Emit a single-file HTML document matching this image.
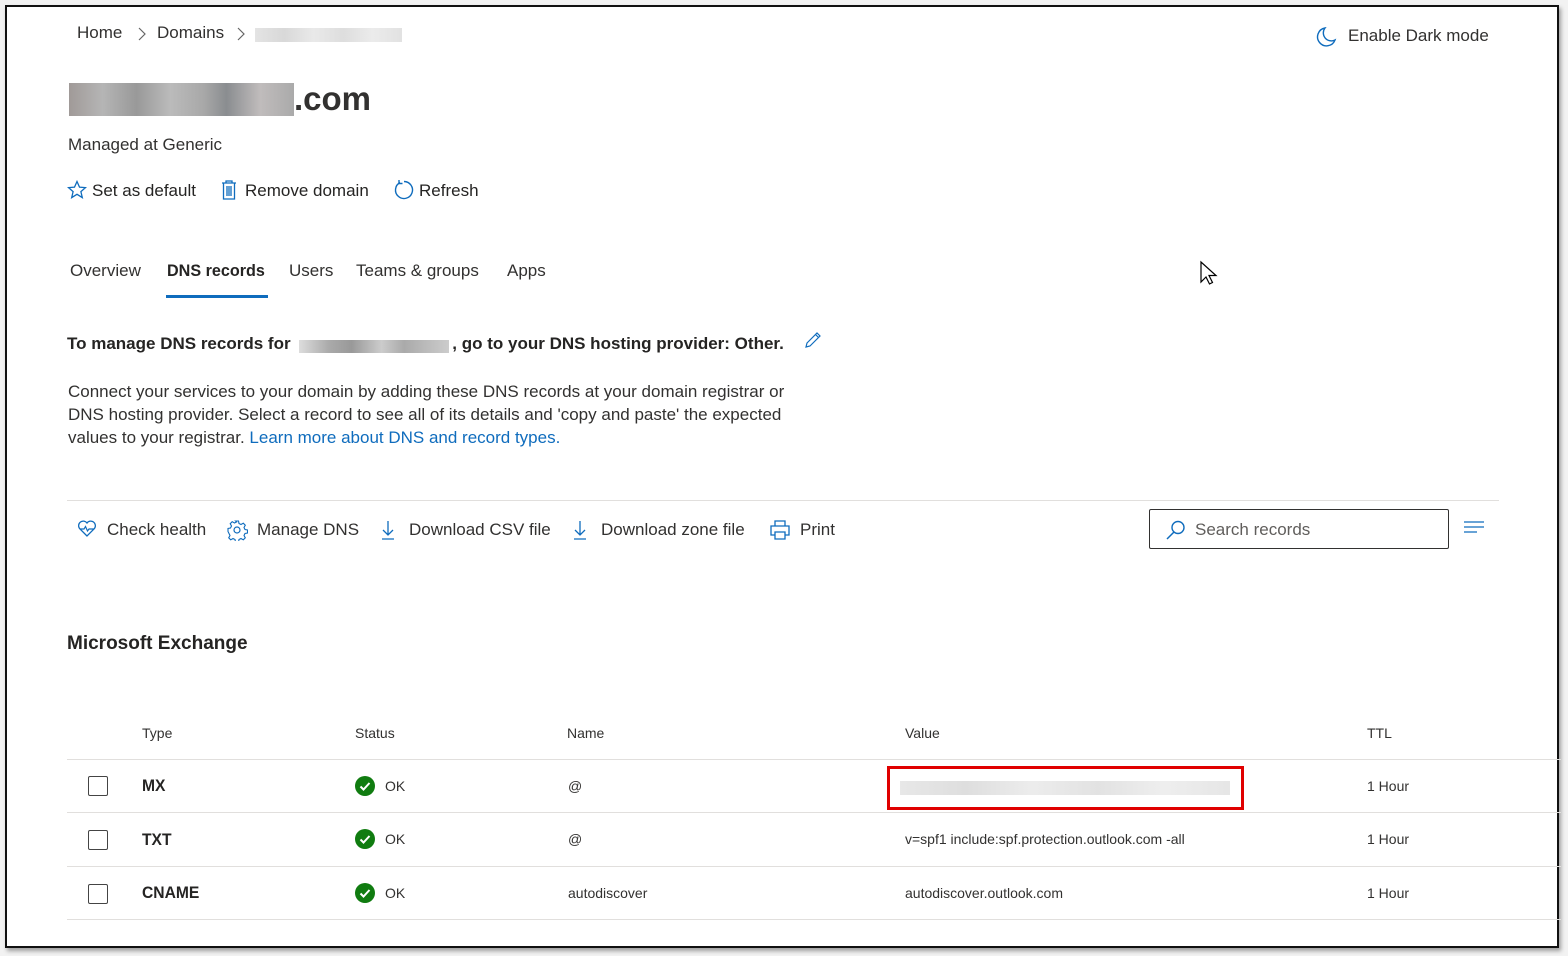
<!DOCTYPE html>
<html><head><meta charset="utf-8"><style>
*{margin:0;padding:0;box-sizing:border-box}
body{width:1568px;height:956px;background:#f2f2f2;position:relative;overflow:hidden;font-family:"Liberation Sans",sans-serif;color:#323130}
#frame{position:absolute;left:5px;top:5px;width:1554px;height:943px;border:2px solid #111;background:#fff;box-shadow:2px 3px 4px rgba(0,0,0,.35)}
.a{position:absolute;white-space:nowrap}
.blur{position:absolute;background:linear-gradient(90deg,#d8d8d8,#c8c8c8 20%,#e0e0e0 40%,#cfcfcf 60%,#e3e3e3 80%,#d5d5d5)}
.blue{color:#0f6cbd}
.t17{font-size:17px}
.hdr{font-size:14px;color:#323130}
.row{position:absolute;left:60px;width:1494px;height:1px;background:#e1dfdd}
.cb{position:absolute;left:81px;width:20px;height:20px;border:1.5px solid #444;border-radius:2px}
.ok{position:absolute;left:348px;width:20px;height:20px;border-radius:50%;background:#107c10}
.type{font-size:17px;left:135px;color:#252423;font-weight:bold;transform:scaleX(.92);transform-origin:left}
.cell{font-size:14px}
</style></head><body>
<div id="frame">
<div class="a t17" style="left:70px;top:16px">Home</div>
<svg class="a" style="left:130px;top:20px" width="10" height="14" viewBox="0 0 10 14"><path d="M2 1l6 6-6 6" fill="none" stroke="#666" stroke-width="1.2"/></svg>
<div class="a t17" style="left:150px;top:16px">Domains</div>
<svg class="a" style="left:229px;top:20px" width="10" height="14" viewBox="0 0 10 14"><path d="M2 1l6 6-6 6" fill="none" stroke="#666" stroke-width="1.2"/></svg>
<div class="blur" style="left:248px;top:21px;width:147px;height:14px;opacity:.7"></div>
<svg class="a" style="left:1309px;top:19px" width="22" height="22" viewBox="0 0 22 22"><path d="M9 2a9 9 0 1 0 10 12A8 8 0 0 1 9 2z" fill="none" stroke="#0f6cbd" stroke-width="1.4"/></svg>
<div class="a t17" style="left:1341px;top:19px">Enable Dark mode</div>
<div class="blur" style="left:62px;top:76px;width:225px;height:33px;background:linear-gradient(90deg,#a09a98,#b5b5b5 15%,#999 30%,#bbb 45%,#a8a8a8 60%,#8a8d90 70%,#c0bcbc 85%,#aaa)"></div>
<div class="a" style="left:287px;top:73px;font-size:33px;font-weight:bold;color:#323130">.com</div>
<div class="a t17" style="left:61px;top:128px">Managed at Generic</div>
<svg class="a" style="left:60px;top:173px" width="20" height="20" viewBox="0 0 20 20"><path d="M10 1.5l2.5 5.6 6 .5-4.6 4 1.4 6-5.3-3.3-5.3 3.3 1.4-6-4.6-4 6-.5z" fill="none" stroke="#0f6cbd" stroke-width="1.3"/></svg>
<div class="a t17" style="left:85px;top:174px;color:#252423">Set as default</div>
<svg class="a" style="left:214px;top:172px" width="16" height="22" viewBox="0 0 16 22"><path d="M1 4h14M5 4V2h6v2M2.5 4v16h11V4M6 7v10M8 7v10M10 7v10" fill="none" stroke="#0f6cbd" stroke-width="1.3"/></svg>
<div class="a t17" style="left:238px;top:174px;color:#252423">Remove domain</div>
<svg class="a" style="left:386px;top:172px" width="22" height="22" viewBox="0 0 22 22"><path d="M7 3.5A8.5 8.5 0 1 0 11 2.5" fill="none" stroke="#0f6cbd" stroke-width="1.4"/><path d="M6 1v3.5h3.5" fill="none" stroke="#0f6cbd" stroke-width="1.4"/></svg>
<div class="a t17" style="left:412px;top:174px;color:#252423">Refresh</div>
<div class="a t17" style="left:63px;top:254px">Overview</div>
<div class="a t17" style="left:160px;top:254px;color:#252423;font-weight:bold;transform:scaleX(.95);transform-origin:left">DNS records</div>
<div class="a" style="left:159px;top:288px;width:102px;height:3px;background:#0f6cbd"></div>
<div class="a t17" style="left:282px;top:254px">Users</div>
<div class="a t17" style="left:349px;top:254px">Teams &amp; groups</div>
<div class="a t17" style="left:500px;top:254px">Apps</div>
<div class="a t17" style="left:60px;top:327px;font-weight:bold;color:#252423">To manage DNS records for <span style="display:inline-block;width:157px"></span>, go to your DNS hosting provider: Other.</div>
<div class="blur" style="left:292px;top:333px;width:150px;height:13px;background:linear-gradient(90deg,#ddd,#aaa 20%,#999 35%,#ccc 55%,#aaa 70%,#ccc)"></div>
<svg class="a" style="left:796px;top:323px" width="20" height="20" viewBox="0 0 20 20"><path d="M3 17l1-4L14 3l3 3L7 16zM12.5 4.5l3 3" fill="none" stroke="#0f6cbd" stroke-width="1.2"/></svg>
<div class="a t17" style="left:61px;top:373px;line-height:23px">Connect your services to your domain by adding these DNS records at your domain registrar or<br>DNS hosting provider. Select a record to see all of its details and 'copy and paste' the expected<br>values to your registrar. <span class="blue">Learn more about DNS and record types.</span></div>
<div class="a" style="left:60px;top:493px;width:1432px;height:1px;background:#e1dfdd"></div>
<svg class="a" style="left:70px;top:512px" width="20" height="20" viewBox="0 0 20 20"><path d="M10 17L2.5 9.5A4.3 4.3 0 0 1 10 4a4.3 4.3 0 0 1 7.5 5.5z" fill="none" stroke="#0f6cbd" stroke-width="1.3"/><path d="M3 10h4l1.5-2.5 2 4.5 1.5-2h5" fill="none" stroke="#0f6cbd" stroke-width="1.2"/></svg>
<div class="a t17" style="left:100px;top:513px">Check health</div>
<svg class="a" style="left:219px;top:512px" width="22" height="22" viewBox="0 0 22 22"><circle cx="11" cy="11" r="3" fill="none" stroke="#0f6cbd" stroke-width="1.2"/><path d="M9.5 2h3l.5 2.5 2 1 2.3-1.3 2 2-1.3 2.3 1 2 2.5.5v3l-2.5.5-1 2 1.3 2.3-2 2-2.3-1.3-2 1-.5 2.5h-3l-.5-2.5-2-1-2.3 1.3-2-2 1.3-2.3-1-2L2 12.5v-3l2.5-.5 1-2-1.3-2.3 2-2 2.3 1.3 2-1z" fill="none" stroke="#0f6cbd" stroke-width="1.1"/></svg>
<div class="a t17" style="left:250px;top:513px">Manage DNS</div>
<svg class="a" style="left:373px;top:512px" width="16" height="22" viewBox="0 0 16 22"><path d="M8 2v14M3 11l5 5 5-5M2 20h12" fill="none" stroke="#0f6cbd" stroke-width="1.3"/></svg>
<div class="a t17" style="left:402px;top:513px">Download CSV file</div>
<svg class="a" style="left:565px;top:512px" width="16" height="22" viewBox="0 0 16 22"><path d="M8 2v14M3 11l5 5 5-5M2 20h12" fill="none" stroke="#0f6cbd" stroke-width="1.3"/></svg>
<div class="a t17" style="left:594px;top:513px">Download zone file</div>
<svg class="a" style="left:762px;top:512px" width="22" height="22" viewBox="0 0 22 22"><path d="M6 7V2h10v5M6 16H2V7h18v9h-4M6 13h10v7H6z" fill="none" stroke="#0f6cbd" stroke-width="1.3"/></svg>
<div class="a t17" style="left:793px;top:513px">Print</div>
<div class="a" style="left:1142px;top:502px;width:300px;height:40px;border:1px solid #323130;border-radius:2px"></div>
<svg class="a" style="left:1158px;top:512px" width="22" height="22" viewBox="0 0 22 22"><circle cx="13" cy="8.5" r="6" fill="none" stroke="#0f6cbd" stroke-width="1.4"/><path d="M9 13l-7 7" stroke="#0f6cbd" stroke-width="1.5"/></svg>
<div class="a t17" style="left:1188px;top:513px;color:#605e5c">Search records</div>
<svg class="a" style="left:1456px;top:513px" width="22" height="14" viewBox="0 0 22 14"><path d="M1 2h20M1 7h20M1 12h13" stroke="#0f6cbd" stroke-width="1.3"/></svg>
<div class="a" style="left:60px;top:626px;font-size:19px;font-weight:bold;color:#252423">Microsoft Exchange</div>
<div class="a hdr" style="left:135px;top:718px">Type</div>
<div class="a hdr" style="left:348px;top:718px">Status</div>
<div class="a hdr" style="left:560px;top:718px">Name</div>
<div class="a hdr" style="left:898px;top:718px">Value</div>
<div class="a hdr" style="left:1360px;top:718px">TTL</div>
<div class="row" style="top:752px"></div>
<div class="row" style="top:805px"></div>
<div class="row" style="top:859px"></div>
<div class="row" style="top:912px"></div>
<div class="cb" style="top:769px"></div><div class="a type" style="top:769px">MX</div>
<svg class="ok" style="top:769px" viewBox="0 0 20 20"><path d="M5.5 10.5l3 3 6-6.5" fill="none" stroke="#fff" stroke-width="2"/></svg>
<div class="a cell" style="left:378px;top:771px">OK</div><div class="a cell" style="left:561px;top:771px">@</div>
<div class="blur" style="left:893px;top:774px;width:330px;height:14px;opacity:.6"></div>
<div class="a" style="left:880px;top:759px;width:357px;height:44px;border:3px solid #e00000"></div>
<div class="a cell" style="left:1360px;top:771px">1 Hour</div>
<div class="cb" style="top:823px"></div><div class="a type" style="top:823px">TXT</div>
<svg class="ok" style="top:822px" viewBox="0 0 20 20"><path d="M5.5 10.5l3 3 6-6.5" fill="none" stroke="#fff" stroke-width="2"/></svg>
<div class="a cell" style="left:378px;top:824px">OK</div><div class="a cell" style="left:561px;top:824px">@</div>
<div class="a cell" style="left:898px;top:824px">v=spf1 include:spf.protection.outlook.com -all</div>
<div class="a cell" style="left:1360px;top:824px">1 Hour</div>
<div class="cb" style="top:877px"></div><div class="a type" style="top:876px">CNAME</div>
<svg class="ok" style="top:876px" viewBox="0 0 20 20"><path d="M5.5 10.5l3 3 6-6.5" fill="none" stroke="#fff" stroke-width="2"/></svg>
<div class="a cell" style="left:378px;top:878px">OK</div><div class="a cell" style="left:561px;top:878px">autodiscover</div>
<div class="a cell" style="left:898px;top:878px">autodiscover.outlook.com</div>
<div class="a cell" style="left:1360px;top:878px">1 Hour</div>
<svg class="a" style="left:1192px;top:253px" width="20" height="28" viewBox="0 0 20 28"><path d="M2 2v20l5-5 3.5 7 3-1.5-3.5-7h7z" fill="#fff" stroke="#000" stroke-width="1.2"/></svg>
</div>
</body></html>
